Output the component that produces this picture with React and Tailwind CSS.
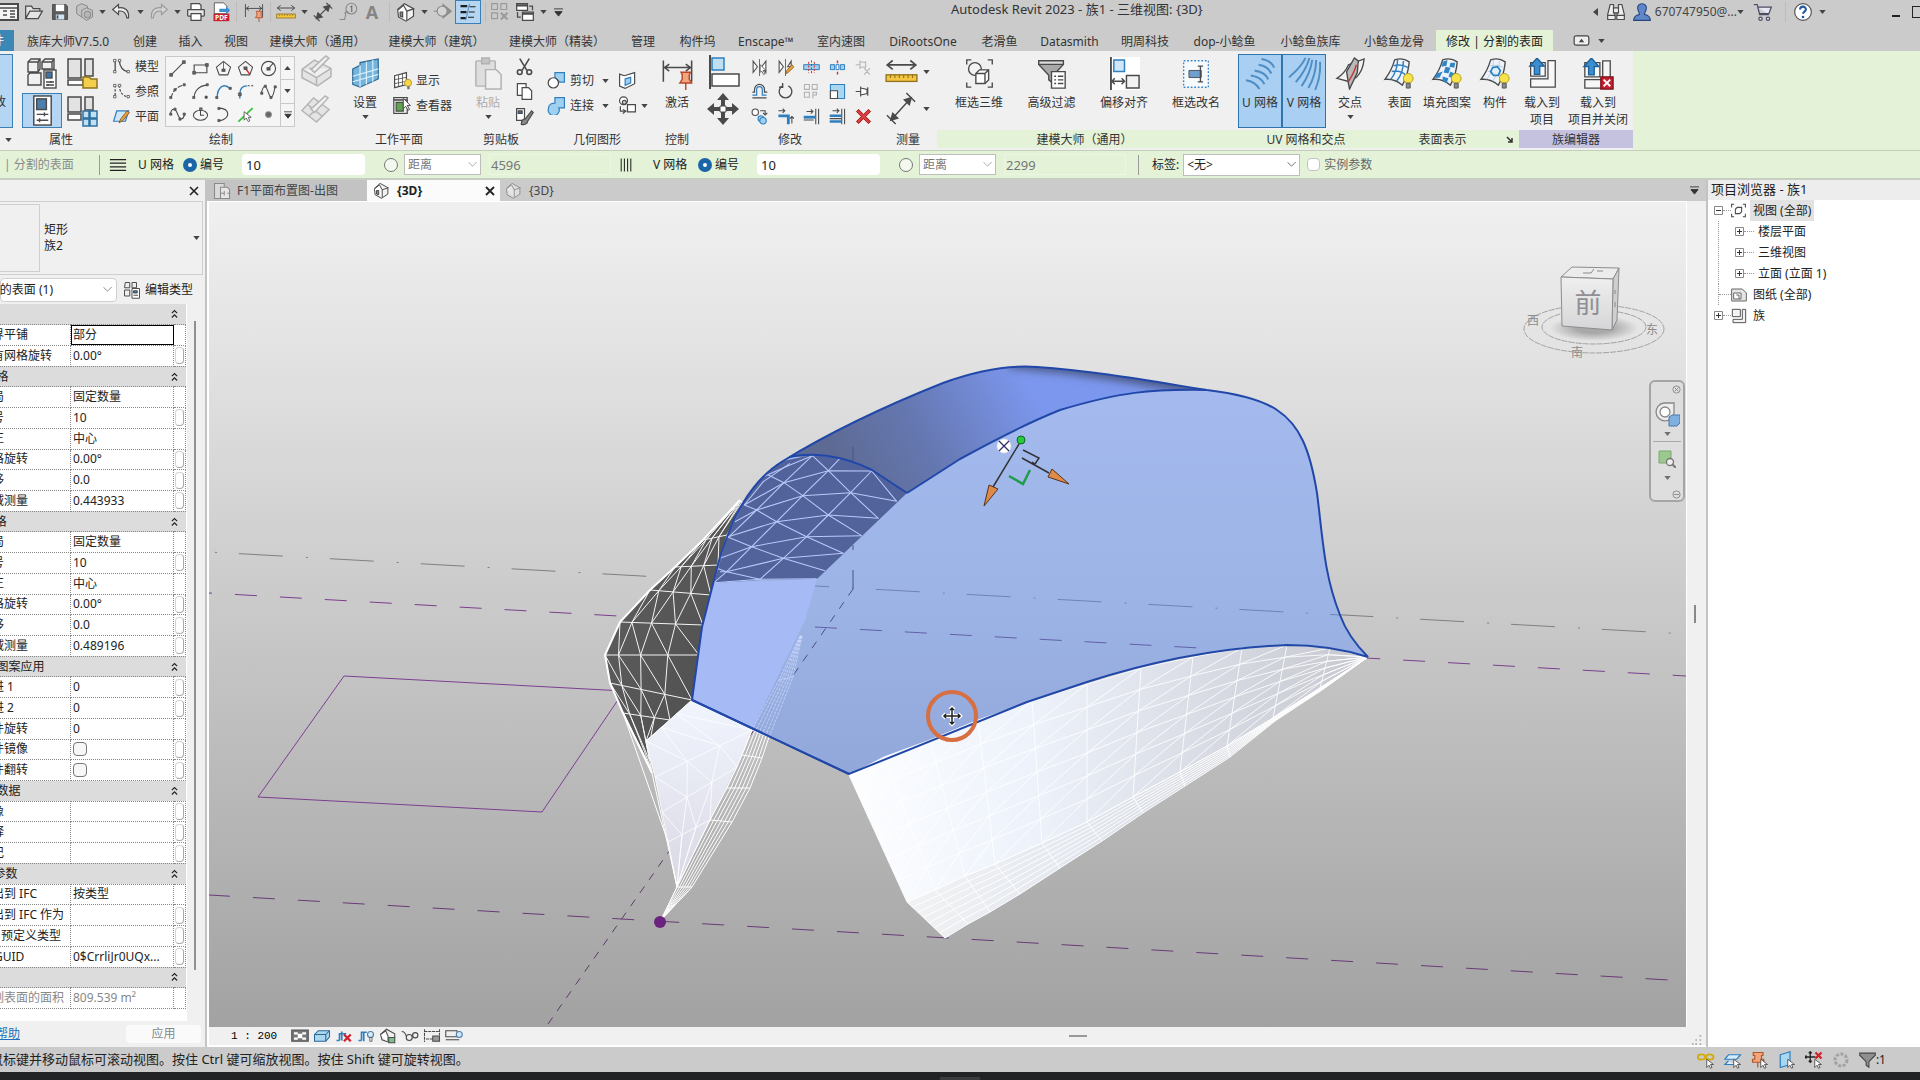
import React from "react";

const D = "#4a4a4a";
const B = "#2f7fbf";
const LB = "#9fd0f0";

const cursor = <path d="M13 11v11l3-3 2 4 2-1-2-4h4z" fill="#fff" stroke="#333" />;
const bulb = (
  <g>
    <circle cx="26" cy="22" r="5" fill="#f7e24a" stroke="#b59a1c" />
    <path d="M24 27h4v5h-4z" fill="#8a8a8a" stroke="#555" />
  </g>
);
const sheet = <path d="M2 23Q9 14 12 3Q20 0 27 5Q26 18 20 29Q12 22 2 23z" fill="#eef4f9" stroke={D} strokeWidth="1.4" />;

const ICONS = {
  app: ["0 0 20 20", <g><rect x="-6" y="2" width="24" height="16" fill="#f4f4f4" stroke={D} strokeWidth="2" /><path d="M-6 6h24M3 9h4M3 13h4M10 9h5M10 12h5M10 15h5" stroke={D} strokeWidth="1.5" /></g>],
  open: ["0 0 24 24", <path d="M2 20V5h7l2 3h8v3M2 20l5-9h15l-5 9z" fill="#e3e3e3" stroke={D} strokeWidth="1.5" />],
  save: ["0 0 24 24", <g><path d="M3 3h16l2 2v16H3z" fill="#5c5c5c" stroke="#444" /><path d="M7 3h10v8H7z" fill="#fff" /><path d="M7 15h10v6H7z" fill="#cfe3f5" /><path d="M9 16v4" stroke={D} strokeWidth="2" /></g>],
  sync: ["0 0 24 24", <g fill="#c2c2c2" stroke="#8a8a8a" strokeWidth="1.2"><path d="M8 2l7 3v9l-7 4-6-4V5z" /><path d="M14 7l7 3v8l-7 4-6-4v-8z" /><circle cx="15" cy="15" r="4" fill="#b5b5b5" /></g>],
  undo: ["0 0 24 24", <path d="M9 3L2 9l7 6v-4c6-1 9 2 10 8h2c1-9-4-13-12-12z" fill="#eee" stroke={D} strokeWidth="1.4" />],
  redo: ["0 0 24 24", <path d="M15 3l7 6-7 6v-4c-6-1-9 2-10 8H3C2 10 7 6 15 7z" fill="#d5d5d5" stroke="#9a9a9a" strokeWidth="1.4" />],
  print: ["0 0 24 24", <g stroke={D} strokeWidth="1.5"><path d="M6 9V2h10l2 2v5" fill="#fff" /><rect x="2" y="9" width="20" height="8" rx="1" fill="#e8e8e8" /><path d="M6 14h12v8H6z" fill="#fff" /></g>],
  pdf: ["0 0 24 24", <g><path d="M4 1h11l4 4v9H4z" fill="#fff" stroke={D} /><path d="M10 8h8V5l5 5-5 5v-3h-8z" fill="#3b8fd0" /><rect x="3" y="14" width="19" height="9" fill="#c8202d" /><text x="12.500" y="22" textAnchor="middle" fontSize="8" fontWeight="700" fill="#fff">PDF</text></g>],
  pinDim: ["0 0 28 28", <g stroke={D} strokeWidth="1.300" fill="none"><path d="M2 3v18M26 3v18M3 9h22M7 6L3 9l4 3M21 6l4 3-4 3" /><g stroke="#b5482a" fill="#f3a57c" strokeWidth="1.200"><path d="M17 13h8l-1 2v4l2 3H16l2-3v-4z" /><path d="M21 22v6" /></g></g>],
  ruler: ["0 0 30 24", <g><path d="M2 6h26M7 2L2 6l5 4M23 2l5 4-5 4" stroke={D} strokeWidth="1.500" fill="none" /><rect x="1" y="15" width="28" height="6" fill="#f2c643" stroke="#94711a" strokeWidth="1.200" /><path d="M5 15v3M9 15v3M13 15v3M17 15v3M21 15v3M25 15v3" stroke="#94711a" /></g>],
  dim: ["0 0 24 24", <g stroke={D} strokeWidth="1.5"><path d="M4 20L20 4M1 16l7 7M16 1l7 7" /><path d="M4 20l2-7 5 5zM20 4l-7 2 5 5z" fill={D} /></g>],
  dimBig: ["0 0 32 34", <g stroke={D} strokeWidth="1.500"><path d="M5 29L26 6M1 24l9 9M21 1l9 9" /><path d="M5 29l2-7 5 5zM26 6l-7 2 5 5z" fill={D} /></g>],
  tag: ["0 0 24 24", <g fill="none" stroke="#8a8a8a" strokeWidth="1.3"><path d="M2 21h6l2-11M8 14l2-3 3 2" /><circle cx="16" cy="8" r="6.500" /><path d="M15 6l1.500-1v7" stroke="#666" /></g>],
  house: ["0 0 24 24", <g stroke={D} strokeWidth="1.4"><path d="M2 9l8-7 11 6v9l-9 6-9-5z" fill="#f2f2f2" /><path d="M2 10l7-6 4 7v11" fill="#fff" /><path d="M13 11l9-3M5 12h3v6l-3-1z" fill="#8d8d8d" /></g>],
  houseG: ["0 0 24 24", <g stroke="#8b8b8b" strokeWidth="1.3"><path d="M2 9l8-7 11 6v9l-9 6-9-5z" fill="#dedede" /><path d="M2 10l7-6 4 7v11" fill="#e6e6e6" /><path d="M13 11l9-3" /></g>],
  section: ["0 0 24 24", <g stroke="#8a8a8a" strokeWidth="1.300"><path d="M12 3l10 8-10 8z" fill="#8f8f8f" /><circle cx="11" cy="11" r="6" fill="#d4d4d4" /><path d="M1 11h4" /></g>],
  thin: ["0 0 24 24", <g stroke="#1e1e1e"><path d="M2 4h9M2 12h8M2 20h7" strokeWidth="3" /><path d="M14 5h8M13 12h8M12 19h8" strokeWidth="1.4" /><path d="M14 1L9 23" stroke="#2f6fae" /></g>],
  closeWin: ["0 0 24 24", <g stroke="#9a9a9a" strokeWidth="1.4" fill="none"><path d="M2 2h7v7H2zM13 2h7v7h-7zM2 13h7v7H2z" /><path d="M13 13l8 8M21 13l-8 8" strokeWidth="2.500" /></g>],
  switchWin: ["0 0 24 24", <g stroke={D} strokeWidth="1.5"><path d="M2 2h13v8H2z" fill="#fff" /><path d="M9 12h13v10H9z" fill="#fff" /><path d="M2 4h13M9 14h13" strokeWidth="2.500" /><path d="M17 5h4v5M3 12v6h4" fill="none" /></g>],
  bino: ["0 0 24 24", <g stroke={D} strokeWidth="1.4" fill="#eee"><path d="M5 3h4v5l2 8v5H2v-6zM15 3h4l3 12v6h-9v-5l2-8z" /><path d="M9 7h6v6H9zM2 16h9M13 16h9" /></g>],
  user: ["0 0 24 24", <path d="M12 2c4 0 6 3 5 7-1 3-2 4-2 6 5 1 7 3 7 7H2c0-4 2-6 7-7 0-2-1-3-2-6-1-4 1-7 5-7z" fill="#5f86c9" stroke="#26457c" strokeWidth="1.3" />],
  cart: ["0 0 24 24", <g fill="#e8e8f5" stroke="#4c4c66" strokeWidth="1.5"><path d="M1 3h4l3 12h11M6 6h16l-3 8H8" /><circle cx="9" cy="20" r="2" /><circle cx="18" cy="20" r="2" /></g>],
  help: ["0 0 24 24", <g><circle cx="12" cy="12" r="10" fill="#fff" stroke="#555" strokeWidth="1.400" /><path d="M8.500 9a3.500 3.500 0 117 0c0 2.500-3.500 2.500-3.500 5" fill="none" stroke="#2156a8" strokeWidth="2.500" /><circle cx="12" cy="18" r="1.600" fill="#2156a8" /></g>],

  typeProps: ["0 0 32 32", <g stroke={D} strokeWidth="1.4" fill="#fff"><path d="M2 5l3-3h9v10l-2 3H2zM16 5l3-3h9v10h-12zM2 18l2-2h11v12H2z" fill="#f0f0f0" /><path d="M2 5h10v9M12 5l2-3M16 5h10v6M26 5l2-3" fill="none" /><rect x="18" y="13" width="12" height="18" /><rect x="20" y="15" width="6" height="6" fill="#3d76ad" /><path d="M20 25h8M20 28h8M25 24v2M22 27v2" /></g>],
  famCat: ["0 0 32 32", <g stroke={D} strokeWidth="1.5" fill="#fff"><path d="M2 2h13v19H2zM19 2h8v17h-8z" fill="#e2e2e2" /><path d="M2 23h15v5H2z" /><path d="M17 20h6l2 2h6v9H17z" fill="#f3cf4d" stroke="#8f7420" /></g>],
  props: ["0 0 32 32", <g stroke={D} strokeWidth="1.5"><rect x="7" y="1" width="18" height="30" fill="#fff" /><rect x="10" y="4" width="10" height="11" fill="#4c7fab" /><path d="M10 20h12M10 26h12M18 18v4M13 24v4" /></g>],
  famTypes: ["0 0 32 32", <g stroke={D} strokeWidth="1.5" fill="#fff"><path d="M2 2h13v15H2zM19 2h8v13h-8z" fill="#e2e2e2" /><path d="M2 19h13v6H2z" /><path d="M17 16h6v7h-6zM24 16h7v7h-7zM17 24h6v7h-6zM24 24h7v7h-7z" fill="#bfe0f5" stroke="#2f6f9f" /></g>],
  model: ["0 0 24 20", <g fill="none" stroke={D} strokeWidth="1.6"><path d="M4 2v15M9 2c1 9 4 14 12 15" /><path d="M2 1h3v3H2zM2 15h3v3H2zM19 15h3v3h-3zM8 1h3v3H8z" fill="#fff" strokeWidth="1" /></g>],
  refl: ["0 0 24 20", <g fill="none" stroke={D} strokeWidth="1.6"><path d="M4 2v15M9 2c1 9 4 14 12 15" strokeDasharray="3 2" /><path d="M2 1h3v3H2zM2 15h3v3H2zM19 15h3v3h-3zM8 1h3v3H8z" fill="#fff" strokeWidth="1" /></g>],
  plane: ["0 0 24 20", <g><path d="M6 3h15l-4 13H2z" fill="#cfe7f8" stroke={B} strokeWidth="1.5" /><path d="M9 18l2-5 8-10 3 2-8 10z" fill="#e9a13c" stroke="#7a4a12" /></g>],
  dLine: ["0 0 24 24", <g stroke={D} strokeWidth="1.600" fill="#fff"><path d="M3 21L21 3" /><path d="M1 19h4v4H1zM19 1h4v4h-4z" fill="#666" strokeWidth="1" /></g>],
  dRect: ["0 0 24 24", <g stroke={D} strokeWidth="1.600" fill="none"><path d="M3 7h18v11H3z" /><path d="M1 16h4v4H1zM19 5h4v4h-4z" fill="#666" strokeWidth="1" /></g>],
  dPoly: ["0 0 24 24", <g stroke={D} strokeWidth="1.500" fill="none"><path d="M12 2l10 8-4 11H6L2 10z" /><path d="M12 2v12" stroke={B} /><path d="M10 13h4v3h-4z" fill="#666" /></g>],
  dPoly2: ["0 0 24 24", <g stroke={D} strokeWidth="1.500" fill="none"><path d="M12 2l10 8-4 11H6L2 10z" /><path d="M12 12l6 8" stroke="#d22" strokeWidth="2" /><path d="M10 10h4v3h-4z" fill="#666" /></g>],
  dCirc: ["0 0 24 24", <g stroke={D} strokeWidth="1.600" fill="none"><circle cx="12" cy="12" r="10" /><path d="M12 12l7-8" /><path d="M10 11h4v3h-4z" fill="#666" /></g>],
  dArc1: ["0 0 24 24", <g stroke={D} strokeWidth="1.500" fill="none"><path d="M3 21C5 11 11 5 21 3" strokeDasharray="7 2" /><path d="M1 19h3v3H1zM20 1h3v3h-3zM7 8h3v3H7z" fill="#666" strokeWidth="1" /></g>],
  dArc2: ["0 0 24 24", <g stroke={D} strokeWidth="1.500" fill="none"><path d="M3 21C3 12 9 4 21 3" /><path d="M1 19h3v3H1zM20 1h3v3h-3z" fill="#666" strokeWidth="1" /><circle cx="20" cy="20" r="1.500" fill="#444" /></g>],
  dArc3: ["0 0 24 24", <g stroke={B} strokeWidth="2" fill="none"><path d="M3 22C3 4 14 0 21 8" /><path d="M1 19h3v3H1zM20 6h3v3h-3z" fill="#666" stroke={D} strokeWidth="1" /></g>],
  dArc4: ["0 0 24 24", <g stroke={B} strokeWidth="2" fill="none"><path d="M4 22v-6C4 8 8 4 14 4" /><path d="M15 4h8" stroke={D} strokeWidth="1.500" strokeDasharray="3 2" /><path d="M2 14h4v4H2z" fill="#666" stroke={D} strokeWidth="1" /></g>],
  dSpl: ["0 0 24 24", <g stroke={D} strokeWidth="1.500" fill="none"><path d="M2 14C5 2 8 2 12 14s7 4 9-8" /><path d="M1 13h3v3H1zM6 3h3v3H6zM14 19h3v3h-3zM20 4h3v3h-3z" fill="#666" strokeWidth="1" /></g>],
  dSpl2: ["0 0 24 24", <g stroke={D} strokeWidth="1.500" fill="none"><path d="M2 11C4 2 9 3 12 11s7 11 10 1" /><path d="M1 10h3v3H1zM7 3h3v3H7zM14 17h3v3h-3zM20 10h3v3h-3z" fill="#666" strokeWidth="1" /></g>],
  dEll: ["0 0 24 24", <g stroke={D} strokeWidth="1.500" fill="none"><ellipse cx="12" cy="13" rx="10" ry="7" /><path d="M12 5v8h5M11 3h3v3h-3z" /></g>],
  dEll2: ["0 0 24 24", <g stroke={D} strokeWidth="1.600" fill="none"><path d="M6 3c15 1 17 14 0 18" /><path d="M4 2h3v3H4zM4 19h3v3H4z" fill="#666" strokeWidth="1" /></g>],
  dPick: ["0 0 24 24", <g><path d="M2 22L22 3" stroke="#35c435" strokeWidth="2.500" /><path d="M10 8v12l3-3 3 5 2-1-2-5h4z" fill="#fff" stroke="#333" /></g>],
  dPt: ["0 0 24 24", <circle cx="12" cy="12" r="4" fill="#666" stroke="#888" strokeWidth="1.500" />],
  faceG: ["0 0 32 32", <g stroke="#b4b4b4" strokeWidth="1.500" fill="#e4e4e4"><path d="M2 14l12-9 16 8v8l-13 9L2 22zM2 14l14 8 14-9M16 22v8" /><path d="M10 13l4 4L28 3l-3-2-13 12z" fill="#f1f1f1" /></g>],
  planeG: ["0 0 32 32", <g stroke="#b4b4b4" strokeWidth="1.500" fill="#e4e4e4"><path d="M2 17L14 4l16 12-13 13z" /><path d="M8 11l15 12M23 10L9 23" /><path d="M11 15l4 4L29 4l-3-2-13 12z" fill="#f1f1f1" /></g>],
  setWP: ["0 0 32 34", <g><path d="M2 12l8-4V5l20-4v22l-20 9-8-3z" fill="#74b4dc" stroke="#2c6892" strokeWidth="1.300" /><path d="M2 20l28-8M10 8v24M17 4v25M24 2v24M2 26l28-8" stroke="#d9effb" strokeWidth="1.300" /></g>],
  show: ["0 0 24 24", <g><path d="M2 6l15-4v15L2 21z" fill="#fff" stroke={D} strokeWidth="1.500" /><path d="M7 5v15M12 3v16M2 11l15-3M2 16l15-3" stroke={D} /><circle cx="19" cy="15" r="4.500" fill="#f7d64a" stroke="#b08c1c" /><path d="M18 19h3v4h-3z" fill="#777" /></g>],
  viewer: ["0 0 24 24", <g stroke={D} strokeWidth="1.500"><rect x="1" y="2" width="17" height="20" fill="#eee" /><path d="M4 8h9v11H4z" fill="#5ba74a" /><path d="M1 5h17" strokeWidth="2" /><path d="M13 3v13l3-3 3 5 2-1-3-5h4z" fill="#fff" strokeWidth="1.200" /></g>],
  pasteG: ["0 0 32 34", <g stroke="#b2b2b2" strokeWidth="1.500" fill="#dedede"><rect x="3" y="4" width="20" height="26" rx="1" /><path d="M9 1h8v6H9z" fill="#c4c4c4" /><path d="M13 13h11l5 5v15H13z" fill="#f0f0f0" /></g>],
  cut: ["0 0 24 24", <g fill="none" stroke={D} strokeWidth="2"><path d="M6 2l9 15M18 2L9 17" /><circle cx="6" cy="19" r="3" /><circle cx="18" cy="19" r="3" /></g>],
  copy: ["0 0 24 24", <g fill="#fff" stroke={D} strokeWidth="1.500"><path d="M3 2h11v15H3z" /><path d="M9 7h8l4 4v11H9z" /></g>],
  match: ["0 0 24 24", <g fill="#fff" stroke={D} strokeWidth="1.500"><path d="M2 2h10v15H2z" /><path d="M4 5h5v3H4z" fill="#3d76ad" /><path d="M8 22c0-5 2-7 5-7l8-10 2 2-7 11c0 3-4 5-8 4z" fill="#888" /></g>],
  cutG: ["0 0 24 24", <g strokeWidth="1.500"><path d="M10 2h12v12h-6l-6-6z" fill={LB} stroke={B} /><circle cx="8" cy="15" r="6.500" fill="#fff" stroke="#444" /></g>],
  joinG: ["0 0 24 24", <g strokeWidth="1.500" fill={LB} stroke={B}><path d="M10 9V2h12v13h-7A7 7 0 112 15c0-4 4-6 8-6z" /></g>],
  coping: ["0 0 24 24", <g strokeWidth="1.500" stroke={D} fill="#fff"><path d="M2 4l6 2 13-4v14l-12 6-7-3z" /><path d="M9 10l7-2v7l-7 3z" fill={LB} stroke={B} /></g>],
  geo: ["0 0 24 24", <g strokeWidth="1.500" stroke={D} fill="#fff"><circle cx="7" cy="6" r="5" /><circle cx="8" cy="8" r="2.500" fill="#ccc" /><path d="M12 11h10v9H12zM3 13v6h6" /><path d="M6 17l4 2-4 3" fill="none" /></g>],
  align: ["0 0 32 34", <g strokeWidth="1.500" stroke={D}><path d="M2 0v34" strokeWidth="2" /><path d="M4 3h12v12H4z" fill="#bfe0f5" stroke={B} /><path d="M4 19h27v12H4z" fill="#fff" /></g>],
  move: ["0 0 32 32", <g fill={D}><path d="M16 0l6 7h-4v6h-4V7h-4zM16 32l6-7h-4v-6h-4v6h-4zM0 16l7-6v4h6v4H7v4zM32 16l-7-6v4h-6v4h6v4z" /><path d="M13 13h6v6h-6z" fill="#fff" stroke={D} /></g>],
  mirPick: ["0 0 24 24", <g strokeWidth="1.500" stroke={D} fill="#fff"><path d="M3 3v16l6-8zM21 3v16l-6-8z" /><path d="M12 0v24" stroke={B} /><path d="M13 8v11l2-2 3 5 2-1-3-5h4z" strokeWidth="1.100" /></g>],
  mirDraw: ["0 0 24 24", <g strokeWidth="1.500" stroke={D} fill="#fff"><path d="M3 3v16l6-8zM20 3v8l-5 0z" /><path d="M12 0v24" stroke={B} /><path d="M12 21l2-5 7-8 3 3-8 8z" fill="#e9a13c" stroke="#7a4a12" strokeWidth="1" /></g>],
  split: ["0 0 24 24", <g strokeWidth="1.400"><path d="M1 8h22v7H1z" fill={LB} stroke={B} /><path d="M12 2v20M8 4v16M16 4v16" stroke="#c33" strokeDasharray="3 2" /></g>],
  splitGap: ["0 0 24 24", <g strokeWidth="1.400"><path d="M2 8h6v7H2zM16 8h6v7h-6z" fill={LB} stroke={B} /><path d="M10 8h4v7h-4z" fill="#fff" stroke={B} /><path d="M12 2v4M12 18v4" stroke="#c33" strokeWidth="2" /></g>],
  unpin: ["0 0 24 24", <g strokeWidth="1.500" stroke="#b5b5b5" fill="none"><path d="M1 8h6M7 2v12M7 4l8 1v6l-8 1M15 3v10M13 13l8 9M21 13l-8 9" /></g>],
  offset: ["0 0 24 24", <g strokeWidth="1.700" fill="none" stroke={D}><path d="M2 17h6V9a4 4 0 018 0v8h6" stroke={B} /><path d="M2 21h20M2 13h3V9a7 7 0 0114 0v4h4" /></g>],
  rotate: ["0 0 24 24", <g strokeWidth="1.900" fill="none" stroke={D}><path d="M8 4a9 9 0 108 0" /><path d="M8 0v6H3" /></g>],
  array: ["0 0 24 24", <g strokeWidth="1.500" fill="none" stroke="#b0b0b0"><path d="M2 2h7v7H2zM13 2h7v7h-7zM2 13h7v7H2z" /><path d="M14 22v-9h5v4h-5" /></g>],
  scale: ["0 0 24 24", <g strokeWidth="1.500" stroke={B}><path d="M2 2h20v20H2z" fill="#a9d7ef" /><path d="M2 11h10v11H2z" fill="#fff" stroke={D} /></g>],
  pin: ["0 0 24 24", <g strokeWidth="1.600" stroke={D} fill="#fff"><path d="M1 12h7M8 5v14M8 7l9 2v6l-9 2M18 6v12" /></g>],
  copy2: ["0 0 24 24", <g strokeWidth="1.500" stroke={D} fill="#fff"><circle cx="6" cy="6" r="4.500" /><circle cx="14" cy="15" r="4" fill={LB} stroke={B} /><circle cx="17" cy="18" r="4.500" fill={LB} stroke={B} /><path d="M13 4h7v5M17 7l3 3 3-3" fill="none" /></g>],
  trimC: ["0 0 24 24", <g><path d="M2 11h14v12" fill="none" stroke={B} strokeWidth="4" /><path d="M2 4h9M8 1l3 3-3 3M21 22V12M18 15l3-3 3 3" fill="none" stroke={D} strokeWidth="1.500" /></g>],
  trimS: ["0 0 24 24", <g><path d="M1 13h16" stroke={B} strokeWidth="4" /><path d="M1 17h14M5 5h9M11 2l3 3-3 3M18 1v22M22 1v22" fill="none" stroke={D} strokeWidth="1.500" /></g>],
  trimM: ["0 0 24 24", <g><path d="M1 11h16M1 19h16" stroke={B} strokeWidth="3.500" /><path d="M1 15h16M5 4h9M11 1l3 3-3 3M18 1v22M22 1v22" fill="none" stroke={D} strokeWidth="1.500" /></g>],
  del: ["0 0 24 24", <path d="M5 2l7 7 7-7 3 3-7 7 7 7-3 3-7-7-7 7-3-3 7-7-7-7z" fill="#e23b3b" stroke="#8e1414" strokeWidth="1.300" />],
  box3d: ["0 0 32 34", <g strokeWidth="1.500" stroke={D} fill="none"><path d="M2 7V2h5M25 2h5v5M2 27v5h5M25 32h5v-5" /><circle cx="11" cy="12" r="7" fill="#f3f3f3" /><path d="M12 17l4-4h10v11l-4 4H12z" fill="#fff" /><path d="M12 17h10v11M22 17l4-4" /></g>],
  filter: ["0 0 32 34", <g strokeWidth="1.500" stroke={D}><path d="M2 3h27v4L18 19v9l-5-4v-5L2 7z" fill="#a9a9a9" /><path d="M2 3h27v4H2z" fill="#ddd" /><path d="M16 15h15v18H16z" fill="#fff" /><path d="M19 20h2M19 24h2M19 28h2M23 20h6M23 24h6M23 28h6" /></g>],
  offAlign: ["0 0 32 34", <g strokeWidth="1.500" stroke={D}><path d="M0 0h32v34H0z" fill="#fff" stroke="none" /><path d="M2 0v34" strokeWidth="2" /><path d="M5 3h11v12H5z" fill="#cfe7f8" stroke={B} /><path d="M18 19h13v13H18z" fill="#f2f2f2" /><path d="M3 25h13M6 22l-3 3 3 3M13 22l3 3-3 3" fill="none" /></g>],
  rename: ["0 0 32 34", <g strokeWidth="1.500"><path d="M2 2h28v30H2z" fill="#f7fafd" stroke="#3a86c8" strokeDasharray="2 2" /><path d="M8 13h14v8H8z" fill="#6f9fd0" stroke={D} strokeWidth="1" /><path d="M21 8v18M18 8h6M18 26h6" stroke={D} /></g>],
  uGrid: ["0 0 34 34", <g stroke="#4e8ec4" strokeWidth="2.200" fill="none"><path d="M18 2c7 1 11 4 13 9M15 8c7 1 11 4 13 9M11 14c7 1 12 4 14 9M7 19c7 1 12 4 14 9M2 24c7 1 11 4 14 9" /></g>],
  vGrid: ["0 0 34 34", <g stroke="#4e8ec4" strokeWidth="2" fill="none"><path d="M18 1Q14 10 1 21M22 1Q19 13 8 26M25 3Q23 17 14 30M29 3Q29 18 21 32M33 5Q34 20 28 34" /></g>],
  inter: ["0 0 32 34", <g strokeWidth="1.400" stroke={D}><path d="M2 22Q10 17 14 8l16-6q-1 12-8 19l-9 4z" fill="#f2f2f2" /><path d="M14 28l-2-13 8-14 4 3-1 12-8 17z" fill="#b9b9b9" /><path d="M14 25Q20 16 22 8" stroke="#c33" fill="none" /></g>],
  surf: ["0 0 34 34", <g>{sheet}<path d="M9 15q8-2 15 4M11 9q8-2 15 2M15 3q0 11-7 20M21 4q0 12-7 21" stroke={B} fill="none" strokeWidth="1.500" />{bulb}</g>],
  patt: ["0 0 34 34", <g>{sheet}<path d="M12 5l5-2-1 6-5 1zM20 6l5 0-1 5-5-1zM15 10l5 1-2 6-5-1zM6 17l6-2-3 6-5 1zM12 20l6 2-2 5-4-3zM20 15l4 2-2 5-4-2z" fill="#2f86c9" />{bulb}</g>],
  comp: ["0 0 34 34", <g>{sheet}<path d="M9 15q8-2 15 4M11 9q8-2 15 2M15 3q0 11-7 20M21 4q0 12-7 21" stroke="#b9cddd" fill="none" /><path d="M14 11l5-1 3 4-2 5-5 0-3-4z" fill="#dff0fb" stroke={B} strokeWidth="1.800" />{bulb}</g>],
  load: ["0 0 32 34", <g strokeWidth="1.400" stroke={D} fill="#f7f7f7"><path d="M3 5h16v15H3zM22 3h8v29H3v-9h19z" /><path d="M10 0l8 9h-5v9H7V9H2z" fill="#3b8fd0" stroke="#1d5f96" /></g>],
  loadClose: ["0 0 34 34", <g strokeWidth="1.400" stroke={D} fill="#f7f7f7"><path d="M3 5h16v15H3zM22 3h8v29H3v-9h19z" /><path d="M10 0l8 9h-5v9H7V9H2z" fill="#3b8fd0" stroke="#1d5f96" /><path d="M20 20h13v13H20z" fill="#c41f2e" stroke="#7b101a" /><path d="M23 23l7 7M30 23l-7 7" stroke="#fff" strokeWidth="2" /></g>],

  uLines: ["0 0 20 16", <path d="M1 2h18M1 6h18M1 10h18M1 14h18" stroke="#222" strokeWidth="1.300" />],
  vLines: ["0 0 16 20", <path d="M2 2v16M6 2v16M10 2v16M14 2v16" stroke="#222" strokeWidth="1.300" />],
  plan: ["0 0 24 24", <g stroke="#8a8a8a" strokeWidth="1.400" fill="#dadada"><path d="M2 2h13v20H2z" /><path d="M10 7h9l3 3v12H10z" fill="#e6e6e6" /><path d="M10 15h5M19 15h3M15 12v6" /></g>],
  vCross: ["0 0 24 24", <g stroke={D} strokeWidth="1.700" fill="none"><path d="M1 7V2h4M19 2h4v5M1 17v5h4M19 22h4v-5" /><path d="M7 10l3-3h7v7l-3 3H7z" /></g>],
  sheetI: ["0 0 24 24", <g stroke="#666" strokeWidth="1.500" fill="#e5e5e5"><path d="M1 3h16l6 6v12H1z" /><path d="M4 9h11v9H4zM8 12h4v6" fill="#fff" /></g>],
  fam: ["0 0 24 24", <g stroke="#555" strokeWidth="1.500" fill="#f3f3f3"><path d="M2 2h12v11H2zM17 2h5v20H3v-5h14z" /></g>],
  editType: ["0 0 24 24", <g stroke={D} strokeWidth="1.300" fill="#fff"><path d="M3 2h6v7H2zM12 2h6v7h-6zM2 12h7v8H2z" fill="#eee" /><path d="M12 10h10v13H12z" /><path d="M14 13h5v3h-5z" fill="#3d76ad" /><path d="M14 19h6" /></g>],

  detail: ["0 0 24 20", <g stroke="#555" strokeWidth="1.500" fill="#fff"><path d="M1 2h22v15H1z" fill="#777" /><path d="M4 5h5v3H4zM15 5h5v3h-5zM4 12h5v3H4zM15 12h5v3h-5zM9 7h6v6H9z" strokeWidth="0" /></g>],
  style: ["0 0 24 20", <g stroke="#2c6892" strokeWidth="1.400" fill="#a9d7ef"><path d="M2 8l5-5h15v8l-5 6H2z" /><path d="M2 8h15v9M17 8l5-5" fill="none" /></g>],
  cropX: ["0 0 24 20", <g fill="none"><path d="M2 16h4M6 16V7h9M9 4v12" stroke={B} strokeWidth="2.200" /><path d="M12 8l9 9M21 8l-9 9" stroke="#cf2030" strokeWidth="3" /></g>],
  cropL: ["0 0 24 20", <g fill="none"><path d="M2 16h4M6 16V5h7M9 6v11" stroke={B} strokeWidth="2.200" /><circle cx="18" cy="8" r="4" stroke="#4d7fae" strokeWidth="1.500" fill="#d7ecfa" /><path d="M17 12h3v5h-3z" stroke={D} /></g>],
  lock3d: ["0 0 24 20", <g stroke={D} strokeWidth="1.400" fill="#eee"><path d="M2 8l8-7 11 6v5l-9 6-8-3z" /><path d="M2 8l7-5 3 7v8" fill="#fff" /><path d="M13 12h8v7h-8z" fill="#7fc08a" /></g>],
  glasses: ["0 0 24 20", <g stroke={D} strokeWidth="1.500" fill="none"><circle cx="11" cy="12" r="4" /><circle cx="19" cy="9" r="3.500" /><path d="M1 4q4 0 6 6M15 9l1-1" /></g>],
  hideL: ["0 0 24 20", <g stroke={D} strokeWidth="1.400" fill="none"><path d="M2 1v17M22 1v8M2 4h20M4 14h9" strokeDasharray="4 1" /><path d="M13 10h9v7h-9z" fill="#999" /></g>],
  analyt: ["0 0 24 20", <g stroke={D} strokeWidth="1.400" fill="#eee"><path d="M1 3h15v8H1z" /><path d="M1 15h18" /><circle cx="19" cy="8" r="4" fill="#cfe7f8" stroke="#4d7fae" /></g>],
  sLink: ["0 0 24 24", <g><ellipse cx="6" cy="8" rx="5" ry="3.500" fill="none" stroke="#d3ab12" strokeWidth="2.500" /><ellipse cx="17" cy="8" rx="5" ry="3.500" fill="none" stroke="#d3ab12" strokeWidth="2.500" />{cursor}</g>],
  sUnder: ["0 0 24 24", <g><path d="M6 5h16l-5 6H1zM6 13l-5 5h14" fill="#d7ecfa" stroke={B} strokeWidth="1.600" />{cursor}</g>],
  sPin: ["0 0 24 24", <g><path d="M3 2h13v4h-2v5h3v4H2v-4h3V6H3zM9 15v7" fill="#f3a57c" stroke="#b5562a" strokeWidth="1.600" />{cursor}</g>],
  sFace: ["0 0 24 24", <g><path d="M3 5l13-4v17L3 22z" fill="#a9d7ef" stroke={B} strokeWidth="1.600" />{cursor}</g>],
  sDrag: ["0 0 24 24", <g><path d="M7 1v14M0 8h14M5 3l2-2 2 2M5 13l2 2 2-2M2 6L0 8l2 2" stroke="#222" strokeWidth="1.700" fill="none" /><path d="M14 2l8 8M22 2l-8 8" stroke="#d0202d" strokeWidth="3" />{cursor}</g>],
  sSpin: ["0 0 24 24", <circle cx="12" cy="12" r="8" fill="none" stroke="#a2a2a2" strokeWidth="4" strokeDasharray="4 2" />],
  sFilter: ["0 0 24 24", <path d="M1 3h22v3l-9 9v8l-4-3v-5L1 6z" fill="#8f8f8f" stroke="#444" strokeWidth="1.500" />],
  dropline: ["0 0 10 10", <path d="M0 1h10M1 4h8L5 9z" fill="#333" stroke="#333" />],
  corner: ["0 0 10 10", <path d="M2 2l5 5M7 3v4H3" fill="none" stroke="#333" strokeWidth="1.500" />],
};

function I({ n, className = "size-5" }) {
  const [vb, art] = ICONS[n];
  return (
    <svg viewBox={vb} className={className + " shrink-0"} aria-hidden="true">
      {art}
    </svg>
  );
}

const Caret = ({ className = "" }) => (
  <svg viewBox="0 0 8 5" className={"h-[4px] w-[7px] shrink-0 " + className} aria-hidden="true">
    <path d="M0 0h8L4 5z" fill="#444" />
  </svg>
);

function Slot({ w, n, caret, children, label }) {
  return (
    <button type="button" aria-label={label || n || "menu"} className={"flex h-6 shrink-0 items-center justify-center " + w}>
      {n && <I n={n} />}
      {caret && <Caret />}
      {children}
    </button>
  );
}

const Sep = ({ w }) => (
  <span className={"flex h-5 shrink-0 justify-center " + w}>
    <span className="w-px bg-[#bcbcbc]" />
  </span>
);

function TitleBar() {
  return (
    <header className="flex h-[30px] shrink-0 items-start bg-[#cbcbcb]">
      <div className="flex items-center">
        <Slot n="app" w="w-[20px]" /><Slot n="open" w="w-[28px]" /><Slot n="save" w="w-[24px]" /><Slot n="sync" w="w-[25px]" />
        <Slot caret w="w-[11px]" /><Slot n="undo" w="w-[25px]" /><Slot caret w="w-[14px]" /><Slot n="redo" w="w-[24px]" /><Slot caret w="w-[12px]" />
        <Slot n="print" w="w-[26px]" /><Slot n="pdf" w="w-[23px]" /><Sep w="w-[9px]" /><Slot n="pinDim" w="w-[25px]" /><Sep w="w-[8px]" />
        <Slot n="ruler" w="w-[24px]" /><Slot caret w="w-[12px]" /><Slot n="dim" w="w-[25px]" /><Slot n="tag" w="w-[26px]" />
        <Slot label="文字" w="w-[22px]"><span className="text-[18px] leading-6 font-bold text-[#858585]">A</span></Slot>
        <Sep w="w-[12px]" /><Slot n="house" w="w-[22px]" /><Slot caret w="w-[14px]" /><Slot n="section" w="w-[24px]" />
        <button type="button" aria-label="细线" className="flex h-6 w-[26px] items-center justify-center border border-[#3c7fb5] bg-[#b5d6f3]"><I n="thin" className="size-[18px]" /></button>
        <Sep w="w-[8px]" /><Slot n="closeWin" w="w-[22px]" /><Slot n="switchWin" w="w-[28px]" /><Slot caret w="w-[8px]" />
        <Slot label="自定义" w="w-[22px]"><I n="dropline" className="size-[9px]" /></Slot>
      </div>
      <h1 className="flex-1 pr-1 text-center text-[13px] leading-[18px] text-[#333]">Autodesk Revit 2023 - 族1 - 三维视图: {"{3D}"}</h1>
      <div className="flex items-center overflow-hidden">
        <Slot label="收起" w="w-[14px]"><svg viewBox="0 0 5 8" className="h-[8px] w-[5px]"><path d="M5 0v8L0 4z" fill="#444" /></svg></Slot>
        <Slot n="bino" w="w-[26px]" /><Slot n="user" w="w-[26px]" />
        <button type="button" className="flex h-6 items-center text-[12px] text-[#444]">670747950@...<Caret /></button>
        <Slot n="cart" w="w-[38px]" /><Sep w="w-[6px]" /><Slot n="help" w="w-[30px]" /><Slot caret w="w-[8px]" />
        <Slot label="最小化" w="ml-[58px] w-[24px]"><span className="mt-2 h-[2px] w-2 bg-[#222]" /></Slot>
        <Slot label="还原" w="w-[12px] overflow-hidden"><span className="ml-2 size-3 shrink-0 border border-[#222]" /></Slot>
      </div>
    </header>
  );
}

const TABS = [
  ["族库大师V7.5.0", "w-[108px]"], ["创建", "w-[46px]"], ["插入", "w-[45px]"], ["视图", "w-[46px]"], ["建模大师（通用）", "w-[117px]"],
  ["建模大师（建筑）", "w-[121px]"], ["建模大师（精装）", "w-[120px]"], ["管理", "w-[52px]"], ["构件坞", "w-[57px]"], ["Enscape™", "w-[80px]"],
  ["室内速图", "w-[70px]"], ["DiRootsOne", "w-[94px]"], ["老滑鱼", "w-[59px]"], ["Datasmith", "w-[81px]"], ["明周科技", "w-[70px]"],
  ["dop-小鲶鱼", "w-[89px]"], ["小鲶鱼族库", "w-[83px]"], ["小鲶鱼龙骨", "w-[84px]"],
];

function RibbonTabs() {
  return (
    <nav className="flex h-[21px] shrink-0 bg-[#cbcbcb] text-[12px] leading-[18px] text-[#333]">
      <button type="button" aria-label="文件" className="flex w-[14px] shrink-0 items-center justify-end bg-[#3b87b5] pr-[10px] text-white"><span className="shrink-0">文件</span></button>
      {TABS.map(([t, w]) => (
        <button key={t} type="button" className={"shrink-0 pt-[2px] whitespace-nowrap text-center " + w}>{t}</button>
      ))}
      <button type="button" className="w-[117px] shrink-0 bg-[#e4f2d8] pt-[2px] text-[#222]">修改 | 分割的表面</button>
      <button type="button" aria-label="最小化功能区" className="ml-5 flex items-center gap-2">
        <svg viewBox="0 0 18 12" className="h-[11px] w-[17px]"><rect x="1" y="1" width="16" height="10" rx="2" fill="#eee" stroke="#444" strokeWidth="1.300" /><path d="M6 8l3-4 3 4z" fill="#444" /></svg>
        <Caret />
      </button>
    </nav>
  );
}

function Panel({ label, w, tone = "", pad = "", children, launcher }) {
  return (
    <section className={"flex shrink-0 flex-col " + w}>
      <div className={"flex h-[79px] " + pad}>{children}</div>
      <div className={"flex h-[18px] items-center justify-center pt-[2px] text-[12px] leading-4 text-[#333] " + tone}>
        <span className={launcher ? "flex-1 text-center" : ""}>{label}</span>
        {launcher && <I n="corner" className="mr-1 size-[10px]" />}
      </div>
    </section>
  );
}

function Big({ n, t, t2, caret, w, tone = "text-[#333]", icon = "size-[33px]" }) {
  return (
    <button type="button" className={"flex h-[78px] shrink-0 flex-col items-center text-[12px] leading-4 " + w + " " + tone}>
      <span className="mt-[6px] mb-[5px] flex h-[33px] items-center"><I n={n} className={icon} /></span>
      <span className="whitespace-nowrap">{t}</span>
      {t2 && <span className="mt-px whitespace-nowrap">{t2}</span>}
      {caret && <Caret className="mt-1" />}
    </button>
  );
}

const Row = ({ n, t, caret, h = "h-[25px]" }) => (
  <button type="button" aria-label={t || n} className={"flex items-center gap-1 text-[12px] text-[#333] " + h}>
    <I n={n} className="size-[19px]" />
    {t && <span className="whitespace-nowrap">{t}</span>}
    {caret && <Caret className="ml-1" />}
  </button>
);

const DRAW = ["dLine", "dRect", "dPoly", "dPoly2", "dCirc", "dArc1", "dArc2", "dArc3", "dArc4", "dSpl", "dSpl2", "dEll", "dEll2", "dPick", "dPt"];
const MOD = ["mirPick", "mirDraw", "split", "splitGap", "unpin", "offset", "rotate", "array", "scale", "pin", "copy2", "trimC", "trimS", "trimM", "del"];
const G = "bg-[#e4f2d8]";

function Ribbon() {
  return (
    <div className="flex h-[100px] shrink-0 overflow-hidden border-b border-[#c3cfb8] bg-[#e4f2d8]">
      <div className="flex shrink-0 bg-[#f0f0f0]">
        <section className="flex w-[17px] shrink-0 flex-col">
          <button type="button" aria-label="修改" className="mt-[3px] flex h-[74px] w-[13px] items-end justify-end border border-l-0 border-[#3c7fb5] bg-[#b5d6f3] pr-[6px] pb-[17px] text-[12px] leading-4 text-[#333]"><span className="shrink-0">修改</span></button>
          <Caret className="mt-[10px] ml-[5px]" />
        </section>
        <Panel label="属性" w="w-[88px]" pad="gap-1 px-[5px] pt-[3px]">
          <div className="flex flex-col gap-[2px]">
            <button type="button" aria-label="族类型" className="flex h-[37px] w-10 items-center justify-center"><I n="typeProps" className="size-8" /></button>
            <button type="button" aria-label="属性" className="flex h-[35px] w-10 items-center justify-center border border-[#3c7fb5] bg-[#b5d6f3]"><I n="props" className="size-[31px]" /></button>
          </div>
          <div className="flex flex-col gap-[2px]">
            <button type="button" aria-label="族类别" className="flex h-[37px] items-center"><I n="famCat" className="size-8" /></button>
            <button type="button" aria-label="族类型列表" className="flex h-[35px] items-center"><I n="famTypes" className="size-8" /></button>
          </div>
        </Panel>
        <Panel label="绘制" w="w-[232px]" pad="pt-[3px] pl-[7px]">
          <div className="flex w-[53px] flex-col"><Row n="model" t="模型" /><Row n="refl" t="参照" /><Row n="plane" t="平面" /></div>
          <div className="mt-[2px] flex h-[71px] w-[130px] border border-[#c9c9c9] bg-[#f5f5f5]">
            <div className="grid w-[115px] grid-cols-5 place-items-center">
              {DRAW.map((d) => <button key={d} type="button" aria-label={d}><I n={d} className="size-[17px]" /></button>)}
            </div>
            <div className="flex w-[14px] flex-col divide-y divide-[#c9c9c9] border-l border-[#c9c9c9]">
              <button type="button" aria-label="上" className="flex flex-1 items-center justify-center"><Caret className="rotate-180" /></button>
              <button type="button" aria-label="下" className="flex flex-1 items-center justify-center"><Caret /></button>
              <button type="button" aria-label="更多" className="flex flex-1 items-center justify-center"><I n="dropline" className="size-[8px]" /></button>
            </div>
          </div>
          <div className="flex flex-col gap-[6px] pt-px pl-[5px]"><I n="faceG" className="size-[33px]" /><I n="planeG" className="size-[31px]" /></div>
        </Panel>
        <Panel label="工作平面" w="w-[124px]" pad="pl-2">
          <Big n="setWP" t="设置" caret w="w-10" icon="size-[31px]" />
          <div className="flex flex-col pt-[17px] pl-2"><Row n="show" t="显示" /><Row n="viewer" t="查看器" /></div>
        </Panel>
        <Panel label="剪贴板" w="w-[80px]" pad="pl-2">
          <Big n="pasteG" t="粘贴" caret w="w-[38px]" tone="text-[#adadad]" />
          <div className="flex flex-col pt-[3px] pl-[8px]"><Row n="cut" /><Row n="copy" /><Row n="match" /></div>
        </Panel>
        <Panel label="几何图形" w="w-[112px]" pad="pl-[6px]">
          <div className="flex w-[71px] flex-col pt-[17px]"><Row n="cutG" t="剪切" caret /><Row n="joinG" t="连接" caret /></div>
          <div className="flex flex-col pt-[17px]"><Row n="coping" /><span className="flex items-center gap-1"><Row n="geo" /><Caret /></span></div>
        </Panel>
        <Panel label="控制" w="w-[48px]" pad="justify-center"><Big n="pinDim" t="激活" w="w-12" /></Panel>
        <Panel label="修改" w="w-[178px]" pad="pl-[6px]">
          <div className="flex w-[39px] flex-col gap-1 pt-1"><I n="align" className="size-[34px]" /><I n="move" className="size-[32px]" /></div>
          <div className="grid h-[78px] w-[130px] grid-cols-5 place-items-center pt-1">
            {MOD.map((d) => <button key={d} type="button" aria-label={d}><I n={d} className="size-[17px]" /></button>)}
          </div>
        </Panel>
        <Panel label="测量" w="w-[58px]" pad="pl-[6px]">
          <div className="flex flex-col gap-1 pt-1">
            <span className="flex items-center gap-[5px]"><I n="ruler" className="size-[33px]" /><Caret /></span>
            <span className="flex items-center gap-[5px]"><I n="dimBig" className="size-[33px]" /><Caret /></span>
          </div>
        </Panel>
        <Panel label="建模大师（通用）" w="w-[295px]" pad="pl-[6px]" tone={G}>
          <Big n="box3d" t="框选三维" w="w-[72px]" icon="size-[31px]" /><Big n="filter" t="高级过滤" w="w-[73px]" icon="size-[31px]" /><Big n="offAlign" t="偏移对齐" w="w-[72px]" /><Big n="rename" t="框选改名" w="w-[72px]" icon="size-[30px]" />
        </Panel>
        <Panel label="UV 网格和交点" w="w-[148px]" pad="pl-[6px]" tone={G}>
          <button type="button" className="mt-[3px] flex h-[74px] w-11 flex-col items-center border border-[#2f74ad] bg-[#a9cff2] text-[12px] leading-4 text-[#333]"><I n="uGrid" className="mt-[2px] mb-[5px] size-[33px]" />U 网格</button>
          <button type="button" className="mt-[3px] flex h-[74px] w-11 flex-col items-center border border-[#2f74ad] bg-[#a9cff2] text-[12px] leading-4 text-[#333]"><I n="vGrid" className="mt-[2px] mb-[5px] size-[33px]" />V 网格</button>
          <Big n="inter" t="交点" caret w="w-[48px]" />
        </Panel>
        <Panel label="表面表示" w="w-[139px]" tone={G} launcher>
          <Big n="surf" t="表面" w="w-[39px]" /><Big n="patt" t="填充图案" w="w-[56px]" /><Big n="comp" t="构件" w="w-[40px]" />
        </Panel>
        <Panel label="族编辑器" w="w-[114px]" tone="bg-[#c5c2df]">
          <Big n="load" t="载入到" t2="项目" w="w-[46px]" icon="size-[31px]" /><Big n="loadClose" t="载入到" t2="项目并关闭" w="w-[66px]" icon="size-[32px]" />
        </Panel>
      </div>
    </div>
  );
}

function GridOption({ axis, icon, iconSlot, value, dist, name }) {
  return (
    <fieldset className="flex items-center">
      <span className={"flex shrink-0 " + iconSlot}><I n={icon} className="h-4 w-[18px]" /></span>
      <span className="w-[56px] pl-[11px] whitespace-nowrap">{axis} 网格</span>
      <label className="flex w-[59px] items-center gap-[3px]">
        <input type="radio" name={name} defaultChecked className="size-[14px] appearance-none rounded-full border-[5px] border-[#1a66a6] bg-white" />编号
      </label>
      <input aria-label={axis + " 编号"} defaultValue={value} className="h-[21px] w-[123px] rounded-sm bg-white px-1 text-[13px]" />
      <label className="flex w-[39px] items-center justify-end pr-[6px]">
        <input type="radio" name={name} aria-label={axis + " 距离"} className="size-[14px] appearance-none rounded-full border border-[#777] bg-[#f3f9ee]" />
      </label>
      <span className="relative flex items-center">
        <select aria-label={axis + " 规则"} className="h-[21px] w-[77px] appearance-none border border-[#bdbdbd] bg-white px-[3px] text-[#777]"><option>距离</option></select>
        <svg viewBox="0 0 10 6" className="pointer-events-none absolute right-1 h-[5px] w-[9px]"><path d="M0 0l5 5 5-5" fill="none" stroke="#999" /></svg>
      </span>
      <input aria-label={axis + " 间距"} disabled defaultValue={dist} className="ml-2 h-[21px] w-[122px] border border-[#ecf6e4] bg-[#e4f2d8] px-px text-[13px] text-[#777]" />
    </fieldset>
  );
}

function OptionsBar() {
  return (
    <div className="flex h-[28px] shrink-0 items-center border-b border-[#c3cfb8] bg-[#e4f2d8] text-[12px] text-[#222]">
      <span className="w-[99px] pl-[4px] whitespace-nowrap text-[#8a8a8a]">| 分割的表面</span>
      <span className="mr-[9px] h-5 w-px bg-[#9a9a9a]" />
      <GridOption axis="U" icon="uLines" iconSlot="w-[18px]" name="u" value="10" dist="4596" />
      <span className="w-[6px]" />
      <GridOption axis="V" icon="vLines" iconSlot="w-[25px]" name="v" value="10" dist="2299" />
      <span className="mr-[13px] ml-3 h-5 w-px bg-[#9a9a9a]" />
      <label className="flex items-center gap-1">标签:
        <span className="relative flex items-center">
          <select className="h-[22px] w-[117px] appearance-none border border-[#bdbdbd] bg-white px-[3px]"><option>&lt;无&gt;</option></select>
          <svg viewBox="0 0 10 6" className="pointer-events-none absolute right-1 h-[5px] w-[9px]"><path d="M0 0l5 5 5-5" fill="none" stroke="#555" /></svg>
        </span>
      </label>
      <label className="ml-[7px] flex items-center gap-1 text-[#666]">
        <input type="checkbox" className="size-[13px] appearance-none rounded-sm border border-[#c3c3c3] bg-white" />实例参数
      </label>
    </div>
  );
}

const PROPS = [
  ["", [["边界平铺", "部分", 0], ["所有网格旋转", "0.00°", 1]]],
  ["U 网格", [["布局", "固定数量", 0], ["编号", "10", 1], ["对正", "中心", 0], ["网格旋转", "0.00°", 1], ["偏移", "0.0", 1], ["区域测量", "0.443933", 1]]],
  ["V 网格", [["布局", "固定数量", 0], ["编号", "10", 1], ["对正", "中心", 0], ["网格旋转", "0.00°", 1], ["偏移", "0.0", 1], ["区域测量", "0.489196", 1]]],
  ["填充图案应用", [["缩进 1", "0", 1], ["缩进 2", "0", 1], ["构件旋转", "0", 0], ["构件镜像", false, 1], ["构件翻转", false, 1]]],
  ["标识数据", [["图像", "", 1], ["注释", "", 1], ["标记", "", 1]]],
  ["IFC 参数", [["导出到 IFC", "按类型", 0], ["导出到 IFC 作为", "", 1], ["IFC 预定义类型", "", 1], ["IfcGUID", "0$CrrliJr0UQx...", 1]]],
  ["", [["分割表面的面积", "809.539 m²", 0]]],
];

const Chevrons = () => (
  <svg viewBox="0 0 8 10" className="h-[10px] w-[7px]"><path d="M1 4l3-3 3 3M1 9l3-3 3 3" fill="none" stroke="#222" strokeWidth="1.300" /></svg>
);

function Properties() {
  return (
    <aside className="flex w-[207px] shrink-0 flex-col border-r-2 border-[#c3c3c3] bg-[#f0f0f0] text-[12px] text-[#222]">
      <div className="flex h-[21px] shrink-0 items-center justify-end pr-[4px]">
        <button type="button" aria-label="关闭" className="p-0.5"><svg viewBox="0 0 10 10" className="size-[10px]"><path d="M1 1l8 8M9 1L1 9" stroke="#222" strokeWidth="1.600" /></svg></button>
      </div>
      <div className="mr-[2px] flex h-[74px] shrink-0 items-center border border-l-0 border-[#cfcfcf]">
        <span className="h-[68px] w-10 border border-l-0 border-[#cfcfcf]" />
        <span className="flex-1 pl-1 leading-4">矩形<br />族2</span>
        <Caret className="mr-[2px]" />
      </div>
      <div className="flex h-[29px] shrink-0 items-center">
        <button type="button" className="flex h-6 w-[117px] items-center justify-end rounded-sm border border-[#d0d0d0] bg-white pr-1">
          <span className="shrink-0 whitespace-nowrap pr-[50px]">分割的表面 (1)</span>
          <svg viewBox="0 0 10 6" className="h-[5px] w-[9px] shrink-0"><path d="M0 0l5 5 5-5" fill="none" stroke="#777" /></svg>
        </button>
        <button type="button" className="ml-[6px] flex items-center gap-1"><I n="editType" className="size-[18px]" />编辑类型</button>
      </div>
      <div className="flex min-h-0 flex-1">
        <div className="-ml-[30px] w-[217px] shrink-0 bg-white pb-3">
          <table className="h-full w-[215px] table-fixed border-collapse leading-4">
            <colgroup><col className="w-[100px]" /><col className="w-[103px]" /><col className="w-[12px]" /></colgroup>
            <tbody>
              {PROPS.map(([g, rows], gi) => (
                <React.Fragment key={gi}>
                  <tr className="h-5 bg-[#dcdcdc]">
                    <th colSpan={2} className="p-0 pl-[2px] text-left font-normal">{g}</th>
                    <td className="p-0"><button type="button" aria-label={"折叠 " + g} className="-ml-[3px] block"><Chevrons /></button></td>
                  </tr>
                  {rows.map(([k, v, b]) => (
                    <tr key={k} className={gi === 6 ? "h-5 text-[#888]" : "h-5"}>
                      <td className="border border-dotted border-[#888] p-0 pl-[9px] whitespace-nowrap">{k}</td>
                      <td className={"border border-dotted border-[#888] p-0 pl-[2px] whitespace-nowrap " + (v === "部分" ? "outline outline-black -outline-offset-1" : "")}>
                        {v === false ? <input type="checkbox" aria-label={k} className="block size-[14px] appearance-none rounded-sm border border-[#777] bg-[#f7f7f7]" /> : v}
                      </td>
                      <td className="border border-dotted border-[#888] p-0">
                        {b ? <button type="button" aria-label={"关联 " + k} className="ml-px block h-[17px] w-[9px] rounded-sm border border-[#d4d4d4] border-r-[#aaa] border-b-[#aaa] bg-white" /> : null}
                      </td>
                    </tr>
                  ))}
                </React.Fragment>
              ))}
            </tbody>
          </table>
        </div>
        <div className="flex-1 pt-[17px] pb-[51px] pl-[7px]"><div className="h-full w-[2px] bg-[#909090]" /></div>
      </div>
      <div className="flex h-[26px] shrink-0 items-center justify-between pr-[4px]">
        <a href="#help" className="-ml-[28px] pl-6 text-[#1c6fb8] underline">帮助</a>
        <button type="button" className="h-[18px] w-[75px] rounded-sm bg-[#fafafa] text-[#888]">应用</button>
      </div>
    </aside>
  );
}

const lerp = (a, b, t) => [a[0] + (b[0] - a[0]) * t, a[1] + (b[1] - a[1]) * t];
const toPath = (pts) => "M" + pts.map((p) => p[0].toFixed(1) + " " + p[1].toFixed(1)).join("L");
function mesh(a, b, n, diag, ease = 1) {
  const rows = [];
  for (let i = 0; i <= n; i++) rows.push(a.map((p, k) => lerp(p, b[k], Math.pow(i / n, ease))));
  let d = rows.map(toPath).join("");
  a.forEach((p, k) => { d += toPath([p, b[k]]); });
  if (diag) {
    for (let i = 0; i < n; i++)
      for (let k = 0; k + 1 < a.length; k++)
        d += diag > 0 ? toPath([rows[i + 1][k], rows[i][k + 1]]) : toPath([rows[i][k], rows[i + 1][k + 1]]);
  }
  return d;
}
const ring = (a, b) => toPath([...a, ...[...b].reverse()]) + "z";

const TOP = [[849, 775], [884, 757], [930, 740], [978, 720], [1032, 701], [1087, 684], [1141, 668], [1193, 657], [1242, 648], [1287, 645], [1330, 648], [1368, 657]];
const FOLD = [[907, 902], [935, 890], [965, 876], [995, 864], [1042, 843], [1087, 822], [1133, 797], [1180, 772], [1227, 746], [1273, 718], [1320, 688], [1368, 657]];
const LOW = [[945, 938], [968, 924], [990, 912], [1020, 894], [1060, 868], [1102, 841], [1143, 813], [1185, 786], [1230, 757], [1275, 721], [1322, 690], [1368, 657]];
const GO = [[740, 500], [703, 540], [675, 567], [650, 590], [620, 622], [605, 655], [610, 683], [623, 713], [652, 773]];
const GI = [[743, 503], [727, 535], [718, 565], [711, 595], [703, 625], [699, 655], [692, 700], [670, 720], [646, 741]];
const WL = [[646, 741], [655, 777], [662, 812], [668, 842], [677, 887]];
const WR = [[692, 700], [752, 730], [737, 767], [710, 820], [677, 887]];
const SL = [[800, 636], [779, 680], [752, 730], [742, 755], [727, 788], [710, 820], [677, 887], [661, 920]];
const SR = [[802, 636], [793, 677], [769, 737], [762, 758], [750, 788], [732, 822], [692, 887], [661, 920]];

const OUTER = "M692 700Q697 663 702 627L714 580Q720 555 727 537Q735 515 743 503Q760 475 783 461Q850 420 943 383Q995 364 1037 367C1095 371 1150 381 1207 390";
const RIGHT = "C1240 394 1262 400 1277 410C1300 425 1310 450 1317 493C1323 540 1324 575 1340 615Q1348 637 1368 657";
const BOTTOM = "Q1330 645 1287 645C1210 648 1140 665 1087 682L1027 702L849 774z";
const INNER = "M1207 390C1150 389 1120 392 1060 410Q1020 426 960 459L907 493";
const ARCH = "M907 493L872 470Q850 459 828 456Q805 453 790 457";
const ROOF = "M790 457Q850 420 943 383Q995 364 1037 367C1095 371 1150 381 1207 390C1150 389 1120 392 1060 410Q1020 426 960 459L907 493L872 470Q850 459 828 456z";

function Model() {
  return (
    <svg viewBox="209 202 1477 825" preserveAspectRatio="xMidYMid slice" className="block h-full w-full">
      <defs>
        <linearGradient id="sky" x1="0" y1="0" x2="0" y2="1"><stop offset="0" stopColor="#f0f0f0" /><stop offset=".2" stopColor="#e1e1e1" /><stop offset=".55" stopColor="#c5c5c5" /><stop offset="1" stopColor="#a2a2a2" /></linearGradient>
        <linearGradient id="face" x1="0" y1="0" x2="0" y2="1"><stop offset="0" stopColor="#a5bbef" /><stop offset=".6" stopColor="#9cb3e6" /><stop offset="1" stopColor="#92a7da" /></linearGradient>
        <linearGradient id="roof" gradientUnits="userSpaceOnUse" x1="850" y1="480" x2="1030" y2="385"><stop offset="0" stopColor="#5d6b94" /><stop offset=".4" stopColor="#6577b0" /><stop offset="1" stopColor="#7c97ee" /></linearGradient>
        <linearGradient id="snow" x1="0" y1="0" x2="1" y2="0"><stop offset="0" stopColor="#fdfeff" /><stop offset=".35" stopColor="#edf2fb" /><stop offset="1" stopColor="#c6c7cf" /></linearGradient>
        <linearGradient id="snow2" x1="0" y1="0" x2="0" y2="1"><stop offset="0" stopColor="#f1f5fe" /><stop offset="1" stopColor="#d9d8e4" /></linearGradient>
        <linearGradient id="coal" x1="0" y1="0" x2="1" y2="1"><stop offset="0" stopColor="#606060" /><stop offset="1" stopColor="#4c4c4c" /></linearGradient>
        <linearGradient id="cube" x1="0" y1="0" x2="0" y2="1"><stop offset="0" stopColor="#efefef" /><stop offset="1" stopColor="#d6d6d8" /></linearGradient>
        <radialGradient id="shade"><stop offset=".4" stopColor="#8f8f8f" /><stop offset="1" stopColor="#8f8f8f" stopOpacity="0" /></radialGradient>
        <filter id="soft" x="-20%" y="-50%" width="140%" height="200%"><feGaussianBlur stdDeviation="4" /></filter>
        <clipPath id="roofClip"><path d={ROOF} /></clipPath>
      </defs>
      <rect x="209" y="202" width="1477" height="825" fill="url(#sky)" />

      <g fill="none">
        <path d="M209 552L1686 634" stroke="#808080" strokeDasharray="44 23 2 22" strokeDashoffset="61" />
        <path d="M209 593L1686 676" stroke="#7c3f8c" strokeDasharray="22 23" strokeDashoffset="19" />
        <path d="M209 895L1686 981" stroke="#6a3a78" strokeDasharray="22 23" strokeDashoffset="1" />
        <path d="M548 1024L853 589" stroke="#5d3b68" strokeDasharray="8 8" />
        <path d="M344 676L624 691L542 812L258 797z" stroke="#7d3f90" />
      </g>

      <path d={ring(GO, GI)} fill="url(#coal)" />
      <path d={mesh(GO, GI, 4, -1, 1.4)} stroke="#f4f4f4" fill="none" />
      <path d={toPath(GO)} stroke="#fff" fill="none" strokeWidth="2" />

      <path d={OUTER + RIGHT + BOTTOM} fill="url(#face)" />
      <path d="M692 700L702 627L714 583L817 579L805 620L752 730z" fill="#a6bbf6" />
      <path d={ROOF} fill="url(#roof)" />
      <g clipPath="url(#roofClip)">
        <path d="M1010 360Q1035 363 1060 365C1105 370 1150 378 1207 388" fill="none" stroke="#4c5a86" strokeWidth="16" filter="url(#soft)" />
      </g>
      <path d="M714 583L727 537L743 503Q760 475 783 461L812 455L843 458L872 470L907 493L817 579L760 580z" fill="#52629a" />
      <g transform="translate(560 340) scale(.33333)" fill="none" stroke="#b9c9fa" strokeWidth="3.200">
        <path d="M462 728L600 718L770 716M480 695L500 695L670 655L850 640M480 655L575 620L740 590L905 587M500 592L650 545L805 525L955 535M525 545L590 510L728 467L872 458L1010 484M553 495L672 428L805 392L935 393M610 410L690 375L757 347" />
        <path d="M757 347L805 392L872 458L955 535M625 405L672 428L728 467L805 525L905 587M553 495L590 510L650 545L740 590L850 640M505 592L575 620L670 655L795 692M470 685L500 695L600 718M935 393L1010 484" />
        <path d="M840 355L805 392L728 467L650 545L575 620L500 695L462 728M935 393L872 458L805 525L740 590L670 655L600 718M757 347L672 428L590 510L505 592M690 370L610 425L553 495" />
      </g>
      <g fill="none">
        <path d="M815 586L1340 615" stroke="#7084b4" strokeDasharray="44 23 2 22" strokeDashoffset="30" />
        <path d="M815 627L1200 648" stroke="#6360a8" strokeDasharray="22 23" />
        <path d="M853 447v14M853 545v5M853 570v19" stroke="#46558c" />
        <path d="M853 589L792 677" stroke="#4b4f88" strokeDasharray="8 8" />
      </g>

      <path d={toPath([[692, 700], [752, 730], [742, 755], [710, 820], [677, 887], [668, 842], [655, 777], [646, 741]]) + "z"} fill="url(#snow2)" />
      <path d={mesh(WL, WR, 3, -1)} stroke="#fff" fill="none" opacity=".8" />
      <path d={mesh(SL.slice(2), SR.slice(2), 6, 0)} stroke="#fff" fill="none" />
      <path d={mesh(SL.slice(0, 3), SR.slice(0, 3), 5, 0)} stroke="#d5e0ff" fill="none" strokeDasharray="3 1" opacity=".65" />
      <path d="M652 773L677 887L661 920L692 887M623 713L668 842" stroke="#fff" fill="none" />

      <path d={ring(TOP, FOLD)} fill="url(#snow)" />
      <path d={ring(FOLD, LOW)} fill="url(#snow)" opacity=".85" />
      <path d={mesh(TOP, FOLD, 6, 1)} stroke="#fff" fill="none" opacity=".85" />
      <path d={mesh(FOLD, LOW, 7, 0)} stroke="#fff" fill="none" />

      <g fill="none" stroke="#2148a8" strokeWidth="2">
        <path d={OUTER + RIGHT + BOTTOM} />
        <path d={INNER} />
        <path d={ARCH} />
        <path d="M849 774L692 700" />
      </g>

      <circle cx="660" cy="922" r="6" fill="#6b2380" />

      <circle cx="1004" cy="446" r="7" fill="#fff" stroke="#ddd" strokeDasharray="2 2" />
      <path d="M999 441l10 10M1009 441l-10 10" stroke="#2b2f66" strokeWidth="1.300" />
      <path d="M1019 444L993 487M1022 458L1049 473M1023 450l16 8-4 6-3-2" stroke="#333" strokeWidth="1.500" fill="none" />
      <path d="M989 485l9 4-14 17zM1052 469l-4 8 21 7z" fill="#dd8a4a" stroke="#55341a" />
      <circle cx="1021" cy="440" r="4" fill="#28c840" stroke="#0d6a1c" />
      <path d="M1009 476l14 8 7-14" stroke="#1f9c48" strokeWidth="2.500" fill="none" />

      <circle cx="952" cy="716" r="24" fill="none" stroke="#d66f41" strokeWidth="4" />
      <path d="M952 708v16M944 716h16M950 710l2-2 2 2M950 722l2 2 2-2M946 714l-2 2 2 2M958 714l2 2-2 2" fill="none" stroke="#fff" strokeWidth="4" />
      <path d="M952 708v16M944 716h16M950 710l2-2 2 2M950 722l2 2 2-2M946 714l-2 2 2 2M958 714l2 2-2 2" fill="none" stroke="#222" strokeWidth="1.500" />
    </svg>
  );
}

function ViewCube() {
  return (
    <svg viewBox="0 0 150 100" className="absolute top-[58px] right-[18px] h-[100px] w-[150px]" role="img" aria-label="ViewCube">
      <g fill="none" stroke="#a2a2a2" strokeDasharray="6 1">
        <ellipse cx="76" cy="69" rx="70" ry="24" /><ellipse cx="76" cy="67" rx="52" ry="17" />
      </g>
      <ellipse cx="76" cy="68" rx="44" ry="13" fill="url(#shade)" opacity=".7" />
      <g stroke="#8d8d8d">
        <path d="M43 17L54 7L101 8L95 19z" fill="#ececec" />
        <path d="M95 19L101 8L99 60L94 70z" fill="#cfcfcf" />
        <path d="M43 17L95 19L94 70L44 66z" fill="url(#cube)" />
      </g>
      <path d="M65 13h8l3-4M79 11h6M97 30v4M97 42v5" stroke="#8a8a8a" fill="none" />
      <text x="70" y="53" textAnchor="middle" fontSize="27" fill="#8f8f95">前</text>
      <g fontSize="12" fill="#8c8c8c"><text x="9" y="65">西</text><text x="128" y="74">东</text><text x="53" y="97">南</text></g>
    </svg>
  );
}

function NavBar() {
  return (
    <div className="absolute top-[178px] right-px flex h-[122px] w-[36px] flex-col items-center rounded-md border-2 border-[#a5a5a5] bg-[#dedede]">
      <svg viewBox="0 0 10 10" className="mt-[3px] mr-[2px] size-[9px] self-end"><circle cx="5" cy="5" r="4" fill="none" stroke="#888" /><path d="M3 3l4 4M7 3L3 7" stroke="#888" /></svg>
      <button type="button" aria-label="导航控制盘" className="mt-2">
        <svg viewBox="0 0 26 26" className="size-[26px]"><path d="M10 1h10v10a9 9 0 11-10-10z" fill="#eee" stroke="#888" strokeWidth="1.300" /><circle cx="11" cy="10" r="5" fill="#fff" stroke="#888" strokeWidth="1.300" /><path d="M15 15l3-2h8v8l-3 3h-8z" fill="#7fb0df" stroke="#4878a8" /></svg>
      </button>
      <Caret className="mt-1 opacity-70" />
      <span className="mt-[5px] h-px w-7 bg-[#aaa]" />
      <button type="button" aria-label="区域放大" className="mt-2">
        <svg viewBox="0 0 18 18" className="size-[18px]"><path d="M1 1h12v12H1z" fill="#9cc98f" stroke="#7aa86d" /><circle cx="12" cy="12" r="3.500" fill="#eee" stroke="#777" strokeWidth="1.300" /><path d="M14 14l4 4" stroke="#777" strokeWidth="2" /></svg>
      </button>
      <Caret className="mt-2 opacity-70" />
      <svg viewBox="0 0 10 10" className="mt-[10px] mr-[2px] size-[9px] self-end"><circle cx="5" cy="5" r="4" fill="none" stroke="#888" /><path d="M2 5h6" stroke="#888" /></svg>
    </div>
  );
}

const VIEW_ICONS = ["detail", "style", "cropX", "cropL", "lock3d", "glasses", "hideL", "analyt"];

function Workspace() {
  return (
    <main className="flex min-w-0 flex-1 flex-col bg-[#f0f0f0]">
      <div className="flex h-[21px] shrink-0 items-center bg-[#cbcbcb] text-[12px] leading-4 text-[#444]">
        <button type="button" className="flex h-full w-[160px] items-center gap-[6px] bg-[#c3c3c3] pl-[6px]"><I n="plan" className="size-[18px]" />F1平面布置图-出图</button>
        <div className="flex h-full w-[133px] items-center justify-between bg-[#fbfbfb] pr-[5px] pl-[6px] font-bold text-[#222]">
          <button type="button" className="flex items-center gap-[7px]"><I n="house" className="size-[17px]" />{"{3D}"}</button>
          <button type="button" aria-label="关闭 {3D}"><svg viewBox="0 0 10 10" className="size-[10px]"><path d="M1 1l8 8M9 1L1 9" stroke="#222" strokeWidth="1.800" /></svg></button>
        </div>
        <button type="button" className="flex items-center gap-[7px] pl-[5px]"><I n="houseG" className="size-[17px]" />{"{3D}"}</button>
        <button type="button" aria-label="视图列表" className="mr-[7px] ml-auto"><I n="dropline" className="size-[9px]" /></button>
      </div>
      <div className="flex min-h-0 flex-1 border-l-2 border-white">
        <div className="relative min-w-0 flex-1 overflow-hidden border-t border-white"><Model /><ViewCube /><NavBar /></div>
        <div className="flex w-[20px] shrink-0 items-center justify-center border-l border-white pr-[3px]"><span className="h-[18px] w-[2px] bg-[#888]" /></div>
      </div>
      <div className="flex h-[20px] shrink-0 items-center border-b-2 border-l-2 border-white text-[11px] text-black">
        <span className="w-[68px] pl-[22px] font-['Liberation_Mono',monospace] whitespace-pre">1 : 200</span>
        <div className="flex items-center gap-[4px] pl-[14px]">
          {VIEW_ICONS.map((n) => <button key={n} type="button" aria-label={n}><I n={n} className="size-[18px]" /></button>)}
        </div>
        <span className="mx-auto h-[2px] w-[18px] bg-[#999]" />
        <svg viewBox="0 0 12 12" className="mr-1 size-[10px] self-end"><path d="M9 0h2v2H9zM9 5h2v2H9zM9 10h2v2H9zM4 5h2v2H4zM4 10h2v2H4zM0 10h2v2H0z" fill="#aaa" /></svg>
      </div>
    </main>
  );
}

const Toggle = ({ open }) => (
  <svg viewBox="0 0 9 9" className="size-[9px] shrink-0"><path d="M.5.500h8v8h-8z" fill="#fff" stroke="#888" /><path d={open ? "M2 4.500h5" : "M2 4.500h5M4.500 2v5"} stroke="#333" /></svg>
);

function Browser() {
  return (
    <aside className="flex w-[214px] shrink-0 flex-col border-l-2 border-[#c3c3c3] bg-white text-[12px] text-[#222]">
      <h2 className="h-[20px] shrink-0 bg-[#ededed] pl-[3px] text-[13px] leading-[18px] whitespace-nowrap">项目浏览器 - 族1</h2>
      <ul className="ml-[6px] leading-[21px]">
        <li>
          <div className="flex h-[21px] items-center"><Toggle open /><span className="w-2 border-t border-dotted border-[#999]" /><I n="vCross" className="size-[15px]" /><span className="ml-1 bg-[#e2e2e2] px-[3px]">视图 (全部)</span></div>
          <ul className="ml-1 border-l border-dotted border-[#999] pl-4">
            {["楼层平面", "三维视图", "立面 (立面 1)"].map((t) => (
              <li key={t} className="flex h-[21px] items-center"><Toggle /><span className="mr-1 w-[10px] border-t border-dotted border-[#999]" />{t}</li>
            ))}
          </ul>
        </li>
        <li className="ml-1 flex h-[21px] items-center border-l border-dotted border-[#999]"><span className="w-3 border-t border-dotted border-[#999]" /><I n="sheetI" className="size-4" /><span className="ml-[6px]">图纸 (全部)</span></li>
        <li className="flex h-[21px] items-center"><Toggle /><span className="w-2 border-t border-dotted border-[#999]" /><I n="fam" className="size-4" /><span className="ml-[6px]">族</span></li>
      </ul>
    </aside>
  );
}

function StatusBar() {
  return (
    <footer className="flex h-[25px] shrink-0 items-center justify-between bg-[#cbcbcb] text-[#222]">
      <p className="-ml-[10px] text-[13px] whitespace-nowrap">鼠标键并移动鼠标可滚动视图。按住 Ctrl 键可缩放视图。按住 Shift 键可旋转视图。</p>
      <div className="flex items-center gap-[9px] pr-[34px] text-[12px]">
        {["sLink", "sUnder", "sPin", "sFace", "sDrag", "sSpin"].map((n) => <button key={n} type="button" aria-label={n}><I n={n} className="size-[18px]" /></button>)}
        <button type="button" className="flex items-center"><I n="sFilter" className="size-[17px]" />:1</button>
      </div>
    </footer>
  );
}

export default function App() {
  return (
    <div className="flex h-screen flex-col overflow-hidden bg-[#cbcbcb] font-['Noto_Sans','Noto_Sans_CJK_SC',sans-serif]">
      <TitleBar />
      <RibbonTabs />
      <Ribbon />
      <OptionsBar />
      <div className="flex min-h-0 flex-1 pt-px">
        <Properties />
        <Workspace />
        <Browser />
      </div>
      <StatusBar />
      <div className="flex h-2 shrink-0 items-end justify-center bg-[#212325]"><span className="h-[3px] w-10 bg-[#3a3c3e]" /></div>
    </div>
  );
}
